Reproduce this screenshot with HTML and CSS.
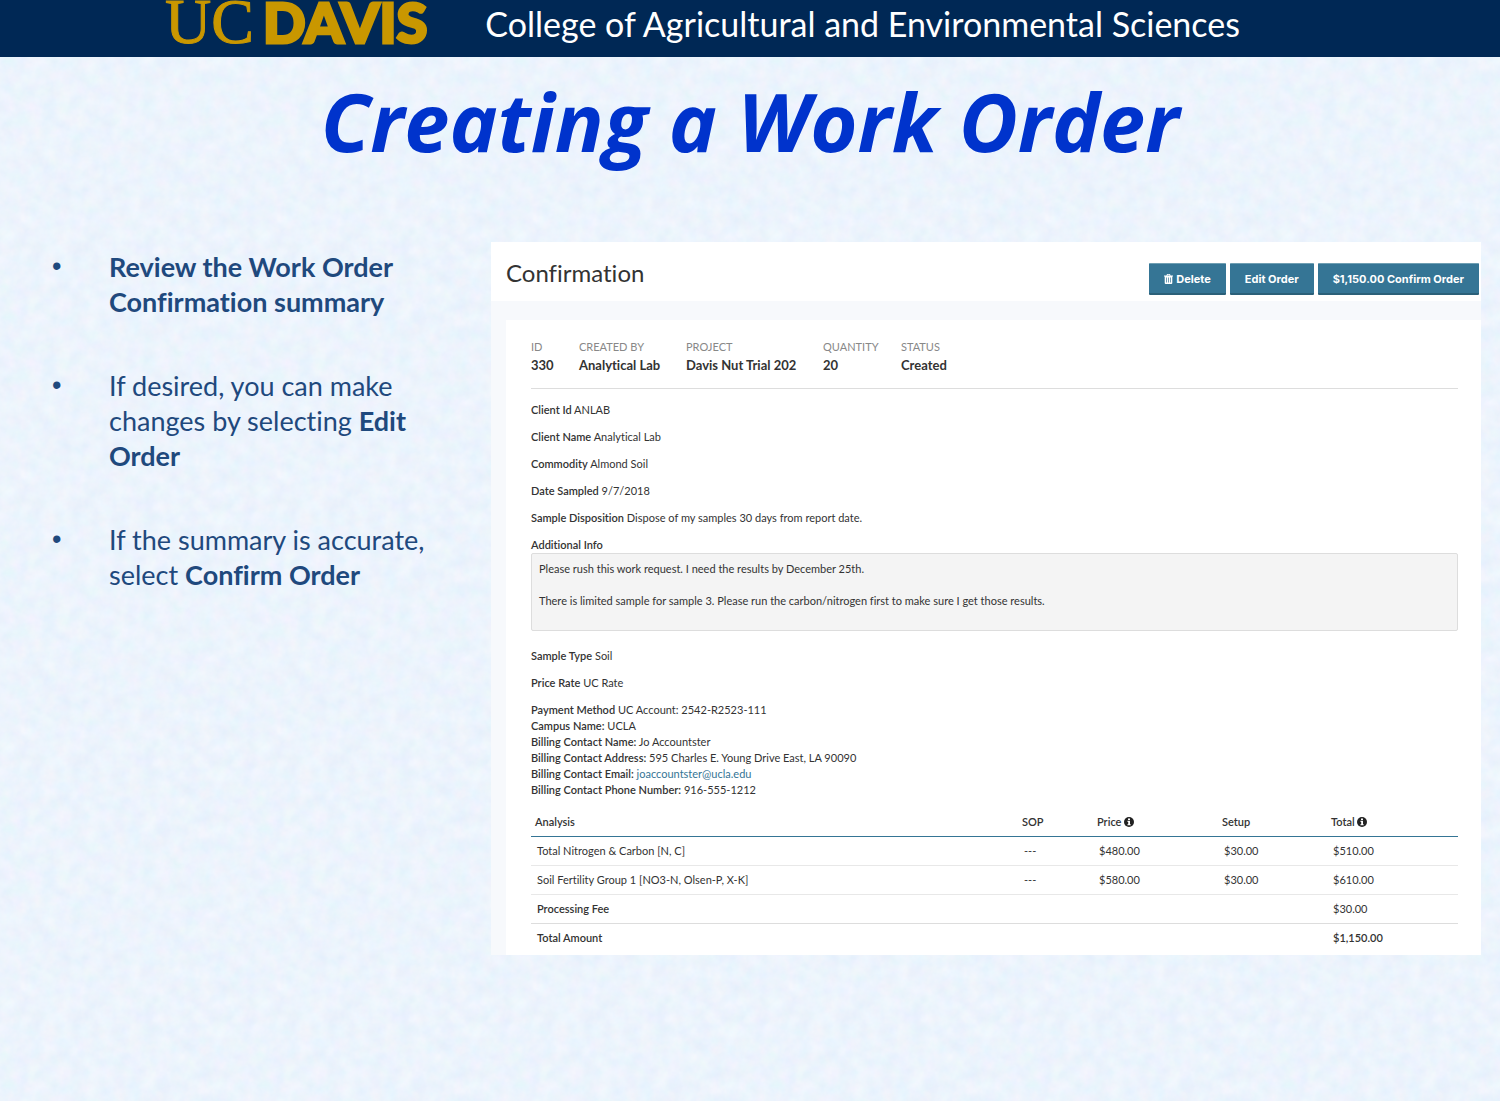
FILE: index.html
```html
<!DOCTYPE html>
<html lang="en">
<head>
<meta charset="utf-8">
<meta name="viewport" content="width=device-width, initial-scale=1">
<title>Creating a Work Order</title>
<link rel="stylesheet" href="styles.css">
</head>
<body>
<header class="banner">
  <div class="logo"><span class="logo-uc">UC</span><span class="logo-davis">DAVIS</span></div>
  <div class="college">College of Agricultural and Environmental Sciences</div>
</header>
<h1 class="title">Creating a Work Order</h1>
<main class="slide">
  <ul class="notes">
    <li><strong>Review the Work Order<br>Confirmation summary</strong></li>
    <li>If desired, you can make<br>changes by selecting <strong>Edit<br>Order</strong></li>
    <li>If the summary is accurate,<br>select <strong>Confirm Order</strong></li>
  </ul>
  <section class="panel">
    <div class="panel-head">
      <h2>Confirmation</h2>
      <div class="actions">
        <button type="button"><svg class="trash" viewBox="0 0 9 10" aria-hidden="true"><path fill="#fff" fill-rule="evenodd" d="M0 1.500h2.500L3 0h3l.5 1.500H9v1H8.300V9q0 1-1 1H1.700q-1 0-1-1V2.500H0zM3.400 1.500h2.200L5.400.8H3.600zM2.200 3.500v5h.7v-5zM4.150 3.500v5h.7v-5zM6.100 3.500v5h.7v-5z"/></svg>Delete</button>
        <button type="button">Edit Order</button>
        <button type="button">$1,150.00 Confirm Order</button>
      </div>
    </div>
    <div class="card">
      <dl class="stats">
        <div><dt>ID</dt><dd>330</dd></div>
        <div><dt>CREATED BY</dt><dd>Analytical Lab</dd></div>
        <div><dt>PROJECT</dt><dd>Davis Nut Trial 202</dd></div>
        <div><dt>QUANTITY</dt><dd>20</dd></div>
        <div><dt>STATUS</dt><dd>Created</dd></div>
      </dl>
      <div class="details">
        <p><b>Client Id</b> ANLAB</p>
        <p><b>Client Name</b> Analytical Lab</p>
        <p><b>Commodity</b> Almond Soil</p>
        <p><b>Date Sampled</b> 9/7/2018</p>
        <p><b>Sample Disposition</b> Dispose of my samples 30 days from report date.</p>
        <div>
          <b>Additional Info</b>
          <div class="info">Please rush this work request. I need the results by December 25th.<br><br>There is limited sample for sample 3. Please run the carbon/nitrogen first to make sure I get those results.</div>
        </div>
        <p><b>Sample Type</b> Soil</p>
        <p><b>Price Rate</b> UC Rate</p>
        <p><b>Payment Method</b> UC Account: 2542-R2523-111<br>
          <b>Campus Name:</b> UCLA<br>
          <b>Billing Contact Name:</b> Jo Accountster<br>
          <b>Billing Contact Address:</b> 595 Charles E. Young Drive East, LA 90090<br>
          <b>Billing Contact Email:</b> <a href="mailto:joaccountster@ucla.edu">joaccountster@ucla.edu</a><br>
          <b>Billing Contact Phone Number:</b> 916-555-1212</p>
      </div>
      <table class="costs">
        <colgroup><col class="c-analysis"><col class="c-sop"><col class="c-price"><col class="c-setup"><col class="c-total"></colgroup>
        <thead>
          <tr><th>Analysis</th><th>SOP</th>
            <th>Price <svg class="hint" viewBox="0 0 10 10" aria-hidden="true"><circle cx="5" cy="5" r="5"/><path fill="#fff" d="M4 1.500h2v1.400H4zM3.500 3.800H6v3.400h.7v1.100H3.400V7.200h.8V4.900h-.7z"/></svg></th>
            <th>Setup</th>
            <th>Total <svg class="hint" viewBox="0 0 10 10" aria-hidden="true"><circle cx="5" cy="5" r="5"/><path fill="#fff" d="M4 1.500h2v1.400H4zM3.500 3.800H6v3.400h.7v1.100H3.400V7.200h.8V4.900h-.7z"/></svg></th></tr>
        </thead>
        <tbody>
          <tr><td>Total Nitrogen &amp; Carbon [N, C]</td><td>---</td><td>$480.00</td><td>$30.00</td><td>$510.00</td></tr>
          <tr><td>Soil Fertility Group 1 [NO3-N, Olsen-P, X-K]</td><td>---</td><td>$580.00</td><td>$30.00</td><td>$610.00</td></tr>
          <tr class="fee"><td colspan="4"><b>Processing Fee</b></td><td>$30.00</td></tr>
          <tr class="sum"><td colspan="4"><b>Total Amount</b></td><td><b>$1,150.00</b></td></tr>
        </tbody>
      </table>
    </div>
  </section>
</main>
</body>
</html>
```
FILE: styles.css
```css
* { box-sizing: border-box; }

body {
  margin: 0;
  min-height: 100vh;
  font-family: Lato, "Open Sans", sans-serif;
  font-variant-ligatures: none;
  color: #333;
  background-color: #ebf3fd;
  background-image: url("data:image/svg+xml,%3Csvg xmlns='http://www.w3.org/2000/svg' width='256' height='256'%3E%3Cfilter id='n' x='0' y='0' width='100%25' height='100%25' color-interpolation-filters='sRGB'%3E%3CfeTurbulence type='fractalNoise' baseFrequency='.07' numOctaves='4' seed='4' stitchTiles='stitch'/%3E%3CfeColorMatrix values='.08 0 0 0 .886 .02 .04 0 0 .926 0 0 .03 0 .975 0 0 0 0 1'/%3E%3C/filter%3E%3Crect width='256' height='256' filter='url(%23n)'/%3E%3C/svg%3E");
}

.banner {
  display: flex;
  align-items: center;
  gap: 58px;
  height: 57px;
  padding: 0 165px 10px;
  background: #002855;
  white-space: nowrap;
}

.logo {
  display: flex;
  align-items: baseline;
  gap: 9px;
  padding-bottom: 4px;
  color: #c99700;
  line-height: 46px;
}
.logo-uc { font-family: "Liberation Serif", serif; font-size: 64px; -webkit-text-stroke: 1px #c99700; }
.logo-davis { font-size: 56px; font-weight: 900; -webkit-text-stroke: 3px #c99700; }

.college { color: #fff; font-size: 34px; line-height: 48px; }

.title {
  margin: 0;
  height: 185px;
  padding-top: 14px;
  text-align: center;
  font-family: "Open Sans", "Noto Sans", sans-serif;
  font-size: 81px;
  line-height: 100px;
  font-weight: 700;
  font-style: italic;
  color: #0033cc;
}

.slide {
  display: grid;
  grid-template-columns: 471fr 990fr;
  padding: 0 19px 80px 20px;
}

.notes {
  display: flex;
  flex-direction: column;
  gap: 49px;
  margin: 0;
  padding: 7px 0 0 32px;
  list-style: none;
  font-size: 27px;
  line-height: 35px;
  color: #1f497d;
}
.notes li { display: flow-root; padding-left: 57px; white-space: nowrap; }
.notes li::before { content: "•"; float: left; margin-left: -57px; font-family: "Liberation Sans", sans-serif; }

.panel { background: #f7f9fc; font-size: 11px; line-height: 16px; }
.panel-head {
  display: flex;
  justify-content: space-between;
  align-items: center;
  height: 59px;
  padding: 14px 2px 0 15px;
  background: #fff;
}
.panel-head h2 {
  margin: 0;
  padding-bottom: 12px;
  font-size: 24px;
  line-height: 30px;
  font-weight: 400;
}
.actions { display: flex; gap: 4px; }
.actions button {
  height: 32px;
  padding: 1px 15px 0;
  border: 0;
  border-top: 1px solid #6f9fb3;
  border-bottom: 2px solid #2b6079;
  border-radius: 1px;
  background: #357595;
  color: #fff;
  font: 700 11px/16px Inter, sans-serif;
}
.trash { width: 9px; height: 10px; margin-right: 3px; vertical-align: -1px; }

.card { margin: 19px 0 0 15px; padding: 18px 23px 3px 25px; background: #fff; }

.stats {
  display: grid;
  grid-template-columns: 48px 107px 137px 78px auto;
  margin: 0;
  padding-bottom: 13px;
  border-bottom: 1px solid #ddd;
  line-height: 18px;
}
.stats dt { color: #888; }
.stats dd { margin: 0; font-size: 13px; line-height: 19px; font-weight: 700; }

.details { display: flex; flex-direction: column; gap: 11px; padding-top: 13px; }
.details p { margin: 0; }
.details b, .costs b { font-weight: 600; }
.details a { color: #357595; text-decoration: none; }
.info {
  min-height: 78px;
  margin-bottom: 6px;
  padding: 7px;
  border: 1px solid #ddd;
  border-radius: 2px;
  background: #f4f4f4;
}

.costs { width: 100%; margin-top: 10px; border-collapse: collapse; table-layout: fixed; }
.c-analysis { width: 487px; }
.c-sop { width: 75px; }
.c-price { width: 125px; }
.c-setup { width: 109px; }
.costs th { height: 28px; padding: 0 4px; text-align: left; font-weight: 600; border-bottom: 1px solid #357595; }
.costs td { height: 29px; padding: 0 6px; border-bottom: 1px solid #e8e8e8; }
.costs .fee td { border-bottom-color: #ddd; }
.costs .sum td { border-bottom: 0; }
.hint { width: 10px; height: 10px; vertical-align: -1px; fill: #222; }
```
